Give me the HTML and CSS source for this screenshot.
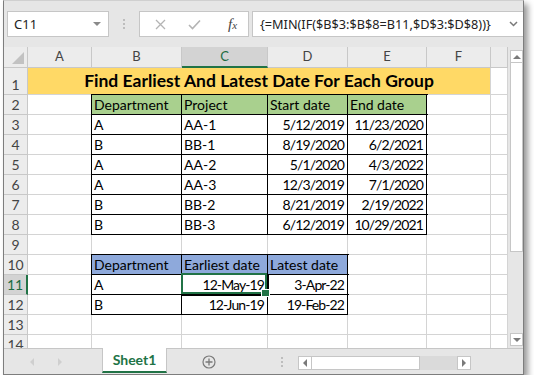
FILE: index.html
```html
<!DOCTYPE html>
<html lang="en">
<head>
    <meta charset="UTF-8">
    <title>Find Earliest And Latest Date For Each Group</title>
    <link rel="stylesheet" href="styles.css">
</head>
<body>
    <div class="window">
        <div class="formula-bar">
            <div class="name-box">C11<span class="caret"></span></div>
            <div class="grip"><i></i><i></i><i></i></div>
            <div class="fx-buttons">
                <svg class="btn-x" width="11" height="11" viewBox="0 0 11 11"><path d="M1 1L10 10M10 1L1 10" stroke="#b4b4b4" stroke-width="1.3" fill="none"/></svg>
                <svg class="btn-ok" width="13" height="11" viewBox="0 0 13 11"><path d="M1 6L4.5 9.5L12 1.5" stroke="#b4b4b4" stroke-width="1.6" fill="none"/></svg>
                <span class="fx">f<small>x</small></span>
            </div>
            <div class="formula">{=MIN(IF($B$3:$B$8=B11,$D$3:$D$8))}<svg class="chev" width="9" height="6" viewBox="0 0 9 6"><path d="M1 1L4.5 4.5L8 1" stroke="#7a7a7a" stroke-width="1.5" fill="none"/></svg></div>
        </div>

        <div class="sheet-area">
            <div class="grid">
                <div class="row hdr">
                    <div class="corner"><svg width="12" height="12" viewBox="0 0 12 12"><path d="M12 0V12H0Z" fill="#c2c2c2"/></svg></div>
                    <div class="ch">A</div>
                    <div class="ch">B</div>
                    <div class="ch on">C</div>
                    <div class="ch">D</div>
                    <div class="ch">E</div>
                    <div class="ch">F</div>
                    <div class="ch"></div>
                </div>
                <div class="row r1">
                    <div class="rh">1</div>
                    <div class="title">Find Earliest And Latest Date For Each Group</div>
                    <div class="c"></div>
                </div>
                <div class="row">
                    <div class="rh">2</div>
                    <div class="c"></div>
                    <div class="c b green">Department</div>
                    <div class="c b green">Project</div>
                    <div class="c b green">Start date</div>
                    <div class="c b green">End date</div>
                    <div class="c"></div>
                    <div class="c"></div>
                </div>
                <div class="row">
                    <div class="rh">3</div>
                    <div class="c"></div>
                    <div class="c b">A</div>
                    <div class="c b">AA-1</div>
                    <div class="c b n">5/12/2019</div>
                    <div class="c b n">11/23/2020</div>
                    <div class="c"></div>
                    <div class="c"></div>
                </div>
                <div class="row">
                    <div class="rh">4</div>
                    <div class="c"></div>
                    <div class="c b">B</div>
                    <div class="c b">BB-1</div>
                    <div class="c b n">8/19/2020</div>
                    <div class="c b n">6/2/2021</div>
                    <div class="c"></div>
                    <div class="c"></div>
                </div>
                <div class="row">
                    <div class="rh">5</div>
                    <div class="c"></div>
                    <div class="c b">A</div>
                    <div class="c b">AA-2</div>
                    <div class="c b n">5/1/2020</div>
                    <div class="c b n">4/3/2022</div>
                    <div class="c"></div>
                    <div class="c"></div>
                </div>
                <div class="row">
                    <div class="rh">6</div>
                    <div class="c"></div>
                    <div class="c b">A</div>
                    <div class="c b">AA-3</div>
                    <div class="c b n">12/3/2019</div>
                    <div class="c b n">7/1/2020</div>
                    <div class="c"></div>
                    <div class="c"></div>
                </div>
                <div class="row">
                    <div class="rh">7</div>
                    <div class="c"></div>
                    <div class="c b">B</div>
                    <div class="c b">BB-2</div>
                    <div class="c b n">8/21/2019</div>
                    <div class="c b n">2/19/2022</div>
                    <div class="c"></div>
                    <div class="c"></div>
                </div>
                <div class="row">
                    <div class="rh">8</div>
                    <div class="c"></div>
                    <div class="c b">B</div>
                    <div class="c b">BB-3</div>
                    <div class="c b n">6/12/2019</div>
                    <div class="c b n">10/29/2021</div>
                    <div class="c"></div>
                    <div class="c"></div>
                </div>
                <div class="row">
                    <div class="rh">9</div>
                    <div class="c"></div>
                    <div class="c"></div>
                    <div class="c"></div>
                    <div class="c"></div>
                    <div class="c"></div>
                    <div class="c"></div>
                    <div class="c"></div>
                </div>
                <div class="row">
                    <div class="rh">10</div>
                    <div class="c"></div>
                    <div class="c b blue">Department</div>
                    <div class="c b blue">Earliest date</div>
                    <div class="c b blue">Latest date</div>
                    <div class="c"></div>
                    <div class="c"></div>
                    <div class="c"></div>
                </div>
                <div class="row">
                    <div class="rh on">11</div>
                    <div class="c"></div>
                    <div class="c b">A</div>
                    <div class="c b n current">12-May-19</div>
                    <div class="c b n">3-Apr-22</div>
                    <div class="c"></div>
                    <div class="c"></div>
                    <div class="c"></div>
                </div>
                <div class="row">
                    <div class="rh">12</div>
                    <div class="c"></div>
                    <div class="c b">B</div>
                    <div class="c b n">12-Jun-19</div>
                    <div class="c b n">19-Feb-22</div>
                    <div class="c"></div>
                    <div class="c"></div>
                    <div class="c"></div>
                </div>
                <div class="row">
                    <div class="rh">13</div>
                    <div class="c"></div>
                    <div class="c"></div>
                    <div class="c"></div>
                    <div class="c"></div>
                    <div class="c"></div>
                    <div class="c"></div>
                    <div class="c"></div>
                </div>
                <div class="row">
                    <div class="rh">14</div>
                    <div class="c"></div>
                    <div class="c"></div>
                    <div class="c"></div>
                    <div class="c"></div>
                    <div class="c"></div>
                    <div class="c"></div>
                    <div class="c"></div>
                </div>
            </div>
            <div class="vscroll">
                <div class="sb-btn"><span class="tri up"></span></div>
                <div class="thumb"></div>
                <div class="track"></div>
                <div class="sb-btn"><span class="tri down"></span></div>
            </div>
        </div>

        <div class="tab-bar">
            <div class="tab-nav"><span class="tri left"></span><span class="tri right"></span></div>
            <div class="tab">Sheet1</div>
            <div class="add-sheet">
                <svg width="14" height="14" viewBox="0 0 14 14"><circle cx="7" cy="7" r="6" stroke="#7a7a7a" stroke-width="1.2" fill="none"/><path d="M7 3.5V10.5M3.5 7H10.5" stroke="#7a7a7a" stroke-width="1.3"/></svg>
            </div>
            <div class="grip split"><i></i><i></i><i></i></div>
            <div class="hscroll">
                <div class="sb-btn"><span class="tri left dark"></span></div>
                <div class="hthumb"></div>
                <div class="htrack"></div>
                <div class="sb-btn"><span class="tri right dark"></span></div>
            </div>
        </div>
    </div>
</body>
</html>
```

FILE: styles.css
```css
* {
    margin: 0;
    padding: 0;
    box-sizing: border-box;
}
body {
    background: #fff;
    padding-left: 3px;
    font-family: Lato, 'Liberation Sans', sans-serif;
    color: #000;
}
.window {
    width: 521px;
    height: 375px;
    border: 1px solid #7d7d7d;
    border-top-color: #d0d0d0;
    background: #e6e6e6;
    box-shadow: 4px 4px 6px rgba(0, 0, 0, 0.4);
    display: flex;
    flex-direction: column;
    overflow: hidden;
}

/* formula bar */
.formula-bar {
    height: 46px;
    flex: none;
    display: flex;
    align-items: flex-start;
    padding: 10px 0 0 3px;
    font-family: 'Noto Sans', sans-serif;
    font-size: 13px;
    color: #222;
}
.name-box {
    width: 102px;
    height: 26px;
    background: #fff;
    border: 1px solid #c6c6c6;
    padding-left: 6px;
    line-height: 24px;
    display: flex;
    align-items: center;
    justify-content: space-between;
}
.caret {
    width: 0;
    height: 0;
    border-left: 4px solid transparent;
    border-right: 4px solid transparent;
    border-top: 4px solid #8a8a8a;
    margin-right: 7px;
}
.grip {
    width: 30px;
    height: 26px;
    display: flex;
    flex-direction: column;
    align-items: center;
    justify-content: center;
    gap: 2px;
}
.grip i {
    width: 2px;
    height: 2px;
    background: #bdbdbd;
}
.fx-buttons {
    width: 110px;
    height: 26px;
    background: #fff;
    border: 1px solid #c6c6c6;
    display: flex;
    align-items: center;
    padding-left: 15px;
}
.btn-ok {
    margin-left: 22px;
}
.fx {
    margin-left: 27px;
    font-family: 'Liberation Serif', serif;
    font-style: italic;
    font-size: 15px;
    color: #444;
}
.fx small {
    font-size: 11px;
}
.formula {
    flex: 1;
    height: 26px;
    margin-left: 3px;
    background: #fff;
    border: 1px solid #c6c6c6;
    border-right: none;
    padding-left: 7px;
    font-size: 12.7px;
    line-height: 24px;
    display: flex;
    align-items: center;
    justify-content: space-between;
}
.chev {
    margin-right: 5px;
}

/* sheet */
.sheet-area {
    height: 301px;
    flex: none;
    display: flex;
}
.grid {
    width: 504px;
    height: 301px;
    overflow: hidden;
    background: #fff;
}
.row {
    display: grid;
    grid-template-columns: 24px 64px 90px 86px 80px 79px 64px 17px;
    height: 20px;
}
.row.hdr {
    height: 21px;
}
.row.r1 {
    height: 27px;
}
.c, .rh, .ch, .corner, .title {
    border-right: 1px solid #d4d4d4;
    border-bottom: 1px solid #d4d4d4;
    background: #fff;
    font-size: 14px;
    line-height: 19px;
    white-space: nowrap;
    overflow: hidden;
}
.c {
    padding-left: 2px;
    display: flex;
    align-items: flex-end;
}
.c.n {
    justify-content: flex-end;
    padding: 0 3px 0 0;
    letter-spacing: -0.9px;
}
.c.b {
    border-right-color: #000;
    border-bottom-color: #000;
    box-shadow: 0 0 0 1px #000;
}
.c.green {
    background: #a9d08e;
}
.c.blue {
    background: #8ea9db;
}
.corner, .ch, .rh {
    background: #ececec;
    border-color: #c8c8c8;
    color: #444;
}
.corner {
    display: flex;
    align-items: flex-end;
    justify-content: flex-end;
    padding: 0 3px 3px 0;
}
.ch {
    text-align: center;
    font-size: 13px;
    line-height: 19px;
}
.ch.on {
    background: #d3d3d3;
    border-bottom: 2px solid #217346;
    color: #1d6b3f;
}
.rh {
    display: flex;
    align-items: flex-end;
    justify-content: center;
}
.rh.on {
    background: #d3d3d3;
    border-right: 2px solid #217346;
    color: #1d6b3f;
}
.title {
    grid-column: span 6;
    background: #ffd966;
    font-weight: bold;
    font-size: 17.5px;
    line-height: 25px;
    text-align: center;
}
.current {
    position: relative;
    overflow: visible;
}
.current::after {
    content: '';
    position: absolute;
    top: -2px;
    left: -1px;
    right: 0;
    bottom: 0;
    border: 2px solid #217346;
    z-index: 1;
}
.current::before {
    content: '';
    position: absolute;
    right: -3px;
    bottom: -3px;
    width: 7px;
    height: 6px;
    background: #217346;
    border: 1px solid #fff;
    z-index: 2;
}

/* scroll bars */
.vscroll {
    width: 15px;
    padding: 3px 0 0 2px;
    display: flex;
    flex-direction: column;
}
.sb-btn {
    width: 13px;
    height: 13px;
    background: #fff;
    border: 1px solid #c6c6c6;
    display: flex;
    align-items: center;
    justify-content: center;
    flex: none;
}
.thumb {
    height: 189px;
    background: #fff;
    border: 1px solid #c6c6c6;
    border-top: none;
}
.track {
    flex: 1;
}
.vscroll .sb-btn:last-child {
    margin-bottom: 2px;
}
.tri {
    width: 0;
    height: 0;
}
.tri.up {
    border-left: 4px solid transparent;
    border-right: 4px solid transparent;
    border-bottom: 4px solid #7a7a7a;
}
.tri.down {
    border-left: 4px solid transparent;
    border-right: 4px solid transparent;
    border-top: 4px solid #7a7a7a;
}
.tri.left {
    border-top: 4px solid transparent;
    border-bottom: 4px solid transparent;
    border-right: 4px solid #cfcfcf;
}
.tri.right {
    border-top: 4px solid transparent;
    border-bottom: 4px solid transparent;
    border-left: 4px solid #cfcfcf;
}
.tri.dark {
    border-right-color: #7a7a7a;
    border-left-color: #7a7a7a;
}
.tri.left.dark {
    border-left-color: transparent;
}
.tri.right.dark {
    border-right-color: transparent;
}

/* sheet tabs */
.tab-bar {
    flex: 1;
    border-top: 1px solid #c6c6c6;
    display: flex;
}
.tab-nav {
    width: 98px;
    display: flex;
    align-items: center;
    padding-left: 26px;
    gap: 24px;
}
.tab {
    width: 65px;
    margin: -1px 0 1px;
    background: #fff;
    border-left: 1px solid #c6c6c6;
    border-right: 1px solid #c6c6c6;
    border-bottom: 2px solid #217346;
    color: #217346;
    font-weight: bold;
    font-size: 14px;
    line-height: 23px;
    text-align: center;
}
.add-sheet {
    width: 95px;
    display: flex;
    align-items: center;
    padding-left: 35px;
}
.grip.split {
    width: 16px;
    height: auto;
    margin-left: 12px;
}
.hscroll {
    display: flex;
    margin: 7px 0 0 8px;
    height: 14px;
}
.hscroll .sb-btn {
    width: 14px;
    height: 14px;
}
.hthumb {
    width: 108px;
    background: #fff;
    border-top: 1px solid #c6c6c6;
    border-bottom: 1px solid #c6c6c6;
    border-right: 1px solid #c6c6c6;
}
.htrack {
    width: 37px;
    background: #dadada;
}
```
